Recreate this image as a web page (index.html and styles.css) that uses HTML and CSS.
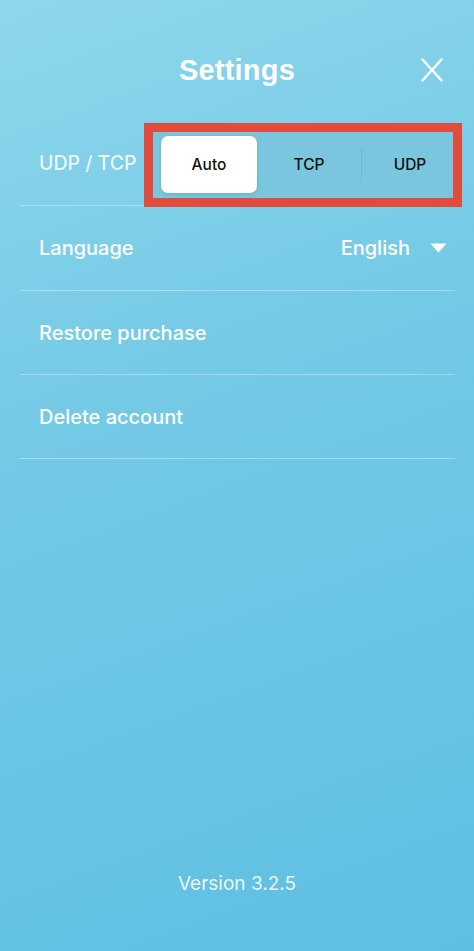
FILE: index.html
```html
<!DOCTYPE html>
<html lang="en">
<head>
    <meta charset="UTF-8">
    <meta name="viewport" content="width=device-width, initial-scale=1.0">
    <title>Settings</title>
    <link rel="stylesheet" href="styles.css">
</head>
<body>
    <div class="screen">
        <div class="header">
            <span></span>
            <h1 class="title">Settings</h1>
            <a href="#" class="close">
                <svg width="22" height="24" viewBox="0 0 22 24">
                    <path d="M1.5 1.5 L20.5 22.5 M20.5 1.5 L1.5 22.5" stroke="#fff" stroke-width="2.5" stroke-linecap="round" fill="none"/>
                </svg>
            </a>
        </div>

        <ul class="list">
            <li class="row">
                <span class="label dim">UDP / TCP</span>
                <div class="mark">
                    <div class="seg">
                        <span class="seg-item active">Auto</span>
                        <span class="seg-item">TCP</span>
                        <span class="seg-item sep">UDP</span>
                    </div>
                </div>
            </li>
            <li class="row">
                <span class="label">Language</span>
                <span class="value">
                    English
                    <svg width="17" height="10" viewBox="0 0 17 10">
                        <path d="M0.5 0.5 H16.5 L8.5 9.5 Z" fill="#fff"/>
                    </svg>
                </span>
            </li>
            <li class="row">
                <span class="label">Restore purchase</span>
            </li>
            <li class="row">
                <span class="label">Delete account</span>
            </li>
        </ul>

        <div class="version">Version 3.2.5</div>
    </div>
</body>
</html>
```

FILE: styles.css
```css
*{
    margin: 0;
    padding: 0;
    list-style-type: none;
    box-sizing: border-box;
}
body{
    font-family: "Inter", "Liberation Sans", Arial, sans-serif;
    color: #fff;
}
.screen{
    width: 474px;
    height: 951px;
    overflow: hidden;
    display: flex;
    flex-direction: column;
    padding: 0 19px;
    background: linear-gradient(160deg, #8dd7ec 0%, #74c9e5 40%, #5ebfe2 100%);
}
.header{
    height: 121px;
    padding-top: 19px;
    display: grid;
    grid-template-columns: 1fr auto 1fr;
    align-items: center;
}
.title{
    font-family: "Liberation Sans", Arial, sans-serif;
    font-size: 29px;
    font-weight: bold;
    color: #fff;
    letter-spacing: 0.2px;
}
.close{
    justify-self: end;
    margin-right: 12px;
    display: flex;
}
.row{
    height: 85px;
    display: flex;
    align-items: center;
    padding-left: 20px;
    border-bottom: 1px solid rgba(255,255,255,0.35);
}
.row + .row + .row{
    height: 84px;
}
.label{
    font-size: 20px;
    color: #fff;
    font-weight: 500;
}
.label.dim{
    color: rgba(255,255,255,0.85);
    font-size: 19.5px;
}
.value{
    margin-left: auto;
    margin-right: 8px;
    display: flex;
    align-items: center;
    gap: 20px;
    font-size: 20px;
    font-weight: 500;
}
.mark{
    margin-left: auto;
    margin-right: -7px;
    margin-top: 4px;
    border: 9px solid #e24c3c;
    width: 318px;
    height: 84px;
}
.seg{
    height: 100%;
    display: grid;
    grid-template-columns: 96px 104px 1fr;
    padding: 4px 0 5px 8px;
    background-color: #79c6de;
}
.seg-item{
    display: flex;
    align-items: center;
    justify-content: center;
    font-size: 15.5px;
    font-weight: 500;
    color: #111;
    position: relative;
}
.seg-item.active{
    background-color: #fff;
    border-radius: 7px;
    box-shadow: 0 1px 4px rgba(0,0,0,0.12);
}
.seg-item.sep{
    padding-left: 6px;
}
.seg-item.sep::before{
    content: "";
    position: absolute;
    left: 0;
    top: 11px;
    bottom: 11px;
    width: 1px;
    background-color: rgba(0,0,0,0.07);
}
.version{
    margin-top: auto;
    margin-bottom: 56px;
    text-align: center;
    font-size: 19px;
    color: rgba(255,255,255,0.88);
}
```
